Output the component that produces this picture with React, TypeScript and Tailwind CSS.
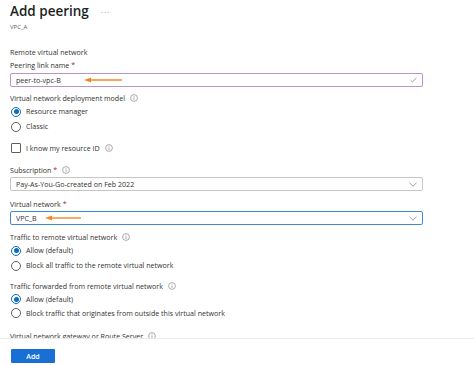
import React from 'react';

const font = { fontFamily: '"Open Sans", "Liberation Sans", Arial, sans-serif' };

function Info() {
  return (
    <svg width="8" height="8" viewBox="0 0 8 8" className="ml-[5px] shrink-0">
      <circle cx="4" cy="4" r="3.4" fill="none" stroke="#8a8886" strokeWidth="0.7" />
      <line x1="4" y1="3.4" x2="4" y2="6" stroke="#8a8886" strokeWidth="0.7" />
      <circle cx="4" cy="2.3" r="0.45" fill="#8a8886" />
    </svg>
  );
}

function Label({ text, required, info, className = '' }: { text: string; required?: boolean; info?: boolean; className?: string }) {
  return (
    <div className={`flex items-center h-[12px] text-[7.1px] text-[#323130] ${className}`}>
      <span>{text}</span>
      {required && <span className="ml-[2px] text-[#a4262c]">*</span>}
      {info && <Info />}
    </div>
  );
}

function Radio({ text, checked, h = 'h-[15px]' }: { text: string; checked?: boolean; h?: string }) {
  return (
    <div className={`flex items-center ${h} text-[7.1px] text-[#323130]`}>
      <span
        className={`w-[10px] h-[10px] rounded-full border flex items-center justify-center shrink-0 ${
          checked ? 'border-[#0f6cbd]' : 'border-[#605e5c]'
        }`}
      >
        {checked && <span className="w-[5px] h-[5px] rounded-full bg-[#0f6cbd]" />}
      </span>
      <span className="ml-[5px]">{text}</span>
    </div>
  );
}

function Chevron() {
  return (
    <svg width="8" height="5" viewBox="0 0 8 5" className="shrink-0">
      <path d="M0.5 0.8 L4 4.2 L7.5 0.8" fill="none" stroke="#8a8886" strokeWidth="0.8" />
    </svg>
  );
}

function Check() {
  return (
    <svg width="7" height="6" viewBox="0 0 7 6" className="shrink-0">
      <path d="M0.6 3.2 L2.5 5 L6.4 0.8" fill="none" stroke="#8a8886" strokeWidth="0.8" />
    </svg>
  );
}

function Arrow({ left, width }: { left: number; width: number }) {
  return (
    <svg
      width={width}
      height="6"
      viewBox={`0 0 ${width} 6`}
      className="absolute top-1/2 -translate-y-1/2"
      style={{ left }}
    >
      <path d={`M0 3 L7 0.6 L7 5.4 Z`} fill="#f08a24" />
      <line x1="5" y1="3" x2={width} y2="3" stroke="#f08a24" strokeWidth="1.4" />
    </svg>
  );
}

export default function App() {
  return (
    <div className="w-[474px] h-[365px] bg-white overflow-hidden flex flex-col" style={font}>
      <div className="h-[338px] overflow-hidden px-[10px] shrink-0">
        <div className="flex items-center h-[23px]">
          <h1 className="text-[13.5px] font-semibold text-[#201f1e] leading-none">Add peering</h1>
          <span className="ml-[12px] text-[8px] text-[#8a8886] tracking-[1px] -mt-[4px]">...</span>
        </div>
        <div className="h-[8px] flex items-center text-[6px] text-[#605e5c]">VPC_A</div>

        <Label text="Remote virtual network" className="mt-[15px]" />
        <Label text="Peering link name" required className="mt-[1px]" />
        <div className="relative mt-[2px] w-[413px] h-[14px] border border-[#b994c9] rounded-[2px] flex items-center justify-between px-[5px] text-[7.1px] text-[#323130]">
          <span>peer-to-vpc-B</span>
          <Check />
          <Arrow left={73} width={38} />
        </div>

        <Label text="Virtual network deployment model" info className="mt-[5px]" />
        <div className="pl-[1px]">
          <Radio text="Resource manager" checked />
          <Radio text="Classic" />
        </div>

        <div className="flex items-center h-[12px] mt-[8px] pl-[1px] text-[7.1px] text-[#323130]">
          <span className="w-[10px] h-[10px] border border-[#605e5c] rounded-[1px] shrink-0" />
          <span className="ml-[5px]">I know my resource ID</span>
          <Info />
        </div>

        <Label text="Subscription" required info className="mt-[10px]" />
        <div className="mt-[1px] w-[413px] h-[14px] border border-[#c8c6c4] rounded-[2px] flex items-center justify-between px-[5px] text-[7.1px] text-[#323130]">
          <span>Pay-As-You-Go-created on Feb 2022</span>
          <Chevron />
        </div>

        <Label text="Virtual network" required className="mt-[7px]" />
        <div className="relative mt-[1px] w-[413px] h-[14px] border-[1.5px] border-[#3c8ad6] rounded-[2px] flex items-center justify-between px-[5px] text-[7.1px] text-[#323130]">
          <span>VPC_B</span>
          <Chevron />
          <Arrow left={34} width={36} />
        </div>

        <Label text="Traffic to remote virtual network" info className="mt-[6px]" />
        <div className="pl-[1px]">
          <Radio text="Allow (default)" checked />
          <Radio text="Block all traffic to the remote virtual network" />
        </div>

        <Label text="Traffic forwarded from remote virtual network" info className="mt-[7px]" />
        <div className="pl-[1px]">
          <Radio text="Allow (default)" checked h="h-[14px]" />
          <Radio text="Block traffic that originates from outside this virtual network" h="h-[14px]" />
        </div>

        <Label text="Virtual network gateway or Route Server" info className="mt-[10px]" />
      </div>
      <div className="border-t border-[#ebebeb] px-[11px] pt-[10px]">
        <button className="w-[44px] h-[14px] bg-[#1a6fd4] text-white text-[7.1px] font-semibold rounded-[1px] flex items-center justify-center">
          Add
        </button>
      </div>
    </div>
  );
}
